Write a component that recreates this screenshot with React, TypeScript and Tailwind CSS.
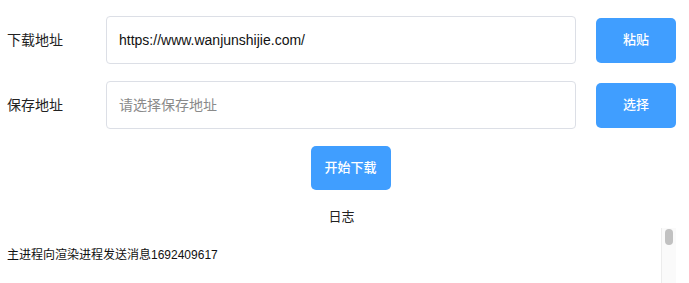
import React from "react";

const cjk = '"Liberation Sans", "Noto Sans CJK SC", sans-serif';

function Row({ label, value, placeholder, btn }: { label: string; value?: string; placeholder?: string; btn: string }) {
  return (
    <div className="flex items-center">
      <div className="w-[99px] text-[14px] text-[#222]">{label}</div>
      <div className="flex-1 h-12 border border-[#dcdfe6] rounded-[4px] flex items-center pl-3 bg-white">
        {value ? (
          <span className="text-[14px] text-[#111]">{value}</span>
        ) : (
          <span className="text-[14px] text-[#8a8a8a]">{placeholder}</span>
        )}
      </div>
      <button className="ml-5 w-20 h-[45px] rounded-[5px] bg-[#409eff] text-white text-[13px] font-medium">{btn}</button>
    </div>
  );
}

export default function App() {
  return (
    <div className="w-[689px] h-[283px] overflow-hidden bg-white pl-[7px] pr-[13px] pt-4" style={{ fontFamily: cjk }}>
      <div className="flex flex-col gap-[17px]">
        <Row label="下载地址" value="https://www.wanjunshijie.com/" btn="粘贴" />
        <Row label="保存地址" placeholder="请选择保存地址" btn="选择" />
      </div>
      <div className="flex justify-center mt-[17px] pl-[18px]">
        <button className="w-20 h-11 rounded-[5px] bg-[#409eff] text-white text-[13px] font-medium">开始下载</button>
      </div>
      <div className="text-center text-[13px] leading-5 text-[#222] mt-[17px]">日志</div>
      <div className="relative mt-px h-[120px]">
        <div className="pt-[19px] text-[12px] leading-[16px] text-[#111]">主进程向渲染进程发送消息1692409617</div>
        <div className="absolute right-0 top-0 bottom-0 w-[15px] bg-[#fafafa] border-l border-[#ececec]">
          <div className="mx-auto mt-px w-2 h-4 rounded-full bg-[#c1c1c1]" />
        </div>
      </div>
    </div>
  );
}
